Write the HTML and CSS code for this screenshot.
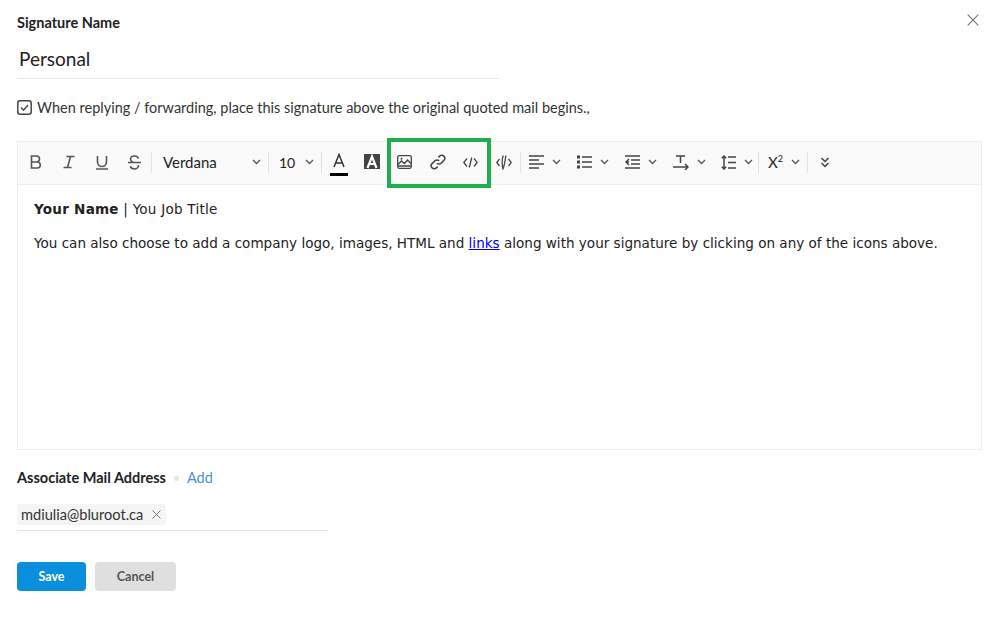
FILE: index.html
```html
<!DOCTYPE html>
<html lang="en">
<head>
<meta charset="utf-8">
<title>Signature</title>
<link rel="stylesheet" href="styles.css">
</head>
<body>
<main class="page">
  <button class="close" aria-label="Close">
    <svg width="12" height="12" viewBox="0 0 12 12"><path d="M.7.7l10.600 10.600M11.300.7L.7 11.300" class="s"/></svg>
  </button>
  <h2 class="label">Signature Name</h2>
  <div class="name-field">Personal</div>
  <label class="check-row">
    <svg class="check" width="15" height="15" viewBox="0 0 15 15"><rect x=".8" y=".8" width="13.400" height="13.400" rx="2.500" class="m"/><path d="M4 7.600l2.500 2.600L11 5" class="m"/></svg>
    <span>When replying / forwarding, place this signature above the original quoted mail begins.,</span>
  </label>

  <section class="editor">
    <div class="toolbar">
      <span class="btn"><svg width="14" height="14" viewBox="0 0 14 14"><path d="M2.500 1h5a3 3 0 0 1 0 6h-5zM2.500 7h5.800a3 3 0 0 1 0 6H2.500z" class="g"/></svg></span>
      <span class="btn"><svg width="14" height="14" viewBox="0 0 14 14"><path d="M4.500 1.500h8M1.500 12.500h8M8.500 1.500l-3 11" class="g"/></svg></span>
      <span class="btn"><svg width="14" height="15" viewBox="0 0 14 15"><path d="M2.500 1v6a4.500 4.500 0 0 0 9 0V1M1 14h12" class="g"/></svg></span>
      <span class="btn"><svg width="15" height="15" viewBox="0 0 15 15"><path d="M1 7.500h13M11.500 3.500C11 2 9.500 1 7.500 1 5.500 1 3.500 2 3.500 4c0 1.500 1 2.500 2.500 3.500M11.500 10c0 2.500-2 4-4 4-2.200 0-3.700-1-4.200-2.700" class="g"/></svg></span>
      <i class="sep"></i>
      <span class="select font-select">Verdana<svg class="chev" width="9" height="6" viewBox="0 0 9 6"><path d="M1 1l3.500 3.500L8 1"/></svg></span>
      <i class="sep"></i>
      <span class="select size-select">10<svg class="chev" width="9" height="6" viewBox="0 0 9 6"><path d="M1 1l3.500 3.500L8 1"/></svg></span>
      <i class="sep"></i>
      <span class="btn">
        <svg class="color-a" width="18" height="23" viewBox="0 0 18 23"><path d="M4 14L9 1.500 14 14M5.600 10h6.800" class="d"/><rect y="20" width="18" height="3" fill="#000"/></svg>
      </span>
      <span class="btn">
        <svg class="bg-a" width="16" height="15" viewBox="0 0 16 15"><rect width="16" height="15" fill="#444"/><path d="M3.500 14L8 2.500 12.500 14M5 10h6" fill="none" stroke="#fff" stroke-width="2.200"/></svg>
      </span>
      <div class="group">
        <span class="btn"><svg width="15" height="14" viewBox="0 0 15 14"><rect x=".7" y=".7" width="13.600" height="12.600" rx="1.500" class="s"/><path d="M1 9.500l3.500-3.500 3 2.500 3-3.500 3.500 3.500M1 11h13" class="s"/><circle cx="4.500" cy="3.800" r="1" fill="#444"/></svg></span>
        <span class="btn"><svg width="16" height="16" viewBox="0 0 16 16"><path d="M6.800 9.200a3 3 0 0 0 4.300 0l2.800-2.800a3 3 0 0 0-4.300-4.300L8.300 3.400M9.200 6.800a3 3 0 0 0-4.300 0L2.100 9.600a3 3 0 0 0 4.300 4.300l1.300-1.300" class="l"/></svg></span>
        <span class="btn"><svg width="15" height="11" viewBox="0 0 15 11"><path d="M4 1.500L.8 5.500 4 9.500M11 1.500l3.200 4-3.200 4M8.700.5L6.300 10.500" class="s"/></svg></span>
      </div>
      <span class="btn"><svg width="16" height="17" viewBox="0 0 16 17"><path d="M3.500 5L.8 8.500 3.500 12M12.500 5l2.700 3.500-2.700 3.500M7.200 1.500C5.800 5 5.800 12 7.200 15.500M9.800 1.500c-.6 5-1.300 10-3 14" class="s"/></svg></span>
      <i class="sep"></i>
      <span class="btn pair"><svg width="15" height="14" viewBox="0 0 15 14"><path d="M0 1h15M0 5h10M0 9h15M0 13h10" class="m"/></svg><svg class="chev" width="9" height="6" viewBox="0 0 9 6"><path d="M1 1l3.500 3.500L8 1"/></svg></span>
      <span class="btn pair"><svg width="15" height="14" viewBox="0 0 15 14"><path d="M5 2h10M5 7h10M5 12h10" class="m"/><path d="M0 .5h3v3H0zM0 5.500h3v3H0zM0 10.500h3v3H0z" fill="#444"/></svg><svg class="chev" width="9" height="6" viewBox="0 0 9 6"><path d="M1 1l3.500 3.500L8 1"/></svg></span>
      <span class="btn pair"><svg width="15" height="14" viewBox="0 0 15 14"><path d="M0 1h15M6 5h9M6 9h9M0 13h15M4 4L1 7l3 3M1 7h3" class="m"/></svg><svg class="chev" width="9" height="6" viewBox="0 0 9 6"><path d="M1 1l3.500 3.500L8 1"/></svg></span>
      <span class="btn pair"><svg width="16" height="15" viewBox="0 0 16 15"><path d="M3 1h9M7.500 1v7M0 12h15M12 9l3 3-3 3" class="m"/></svg><svg class="chev" width="9" height="6" viewBox="0 0 9 6"><path d="M1 1l3.500 3.500L8 1"/></svg></span>
      <span class="btn pair pair-short"><svg width="15" height="15" viewBox="0 0 15 15"><path d="M7 2h8M7 7.500h8M7 13h8M3 1v13M.8 3.200L3 1l2.200 2.200M.8 11.800L3 14l2.200-2.200" class="m"/></svg><svg class="chev" width="9" height="6" viewBox="0 0 9 6"><path d="M1 1l3.500 3.500L8 1"/></svg></span>
      <i class="sep"></i>
      <span class="btn pair sup"><span class="x2">X<sup>2</sup></span><svg class="chev" width="9" height="6" viewBox="0 0 9 6"><path d="M1 1l3.500 3.500L8 1"/></svg></span>
      <i class="sep"></i>
      <span class="btn"><svg width="10" height="11" viewBox="0 0 10 11"><path d="M1.500 1L5 4.500 8.500 1M1.500 6L5 9.500 8.500 6" class="m"/></svg></span>
    </div>
    <div class="content">
      <p class="title-line"><strong>Your Name</strong> | You Job Title</p>
      <p>You can also choose to add a company logo, images, HTML and <a href="#">links</a> along with your signature by clicking on any of the icons above.</p>
    </div>
  </section>

  <div class="assoc">
    <h2 class="label">Associate Mail Address</h2>
    <i class="dot"></i>
    <a class="add" href="#">Add</a>
  </div>
  <div class="mail-field">
    <span class="chip">mdiulia@bluroot.ca
      <svg width="9" height="9" viewBox="0 0 9 9"><path d="M.5.500l8 8M8.500.500l-8 8" fill="none" stroke="#777"/></svg>
    </span>
  </div>
  <div class="actions">
    <button class="primary">Save</button>
    <button class="secondary">Cancel</button>
  </div>
</main>
</body>
</html>
```
FILE: styles.css
```css
* { box-sizing: border-box; }
html, body { margin: 0; height: 100%; background: #fff; overflow: hidden; }
body { font-family: Lato, sans-serif; color: #222; }
.page { position: relative; padding: 14px 18px 0 17px; height: 617px; }
.s { fill: none; stroke: #444; stroke-width: 1.3; }
.g { fill: none; stroke: #555; stroke-width: 1.6; }
.l { fill: none; stroke: #444; stroke-width: 1.5; }
.m { fill: none; stroke: #444; stroke-width: 1.5; }
.d { fill: none; stroke: #333; stroke-width: 1.5; }
.close { position: absolute; top: 14px; right: 21px; padding: 0; border: 0; background: none; line-height: 0; }
.close .s { stroke: #777; stroke-width: 1.2; }
.label { margin: 0; font-size: 14.500px; line-height: 17px; font-weight: 700; color: #222; }
.name-field { width: 482px; height: 39px; margin-top: 9px; padding: 6px 0 0 2px; font-size: 19px; line-height: 26px; color: #222; border-bottom: 1px solid #e6e6e6; }
.check-row { display: flex; align-items: center; gap: 5px; margin-top: 18px; height: 20px; font-size: 14.500px; color: #333; }
.check { flex: none; }
.editor { width: 965px; height: 309px; margin-top: 24px; border: 1px solid #eee; }
.toolbar { display: flex; align-items: center; height: 43px; padding: 0 0 2px 1px; background: #fafafa; border-bottom: 1px solid #eee; }
.btn { display: flex; align-items: center; justify-content: center; flex: none; width: 33px; height: 30px; }
.sep { flex: none; width: 1px; height: 21px; background: #e2e2e2; }
.select { display: flex; align-items: center; flex: none; font-size: 15px; color: #222; }
.font-select { width: 116px; padding: 0 7px 0 11px; justify-content: space-between; }
.size-select { width: 52px; padding: 0 7px 0 10px; justify-content: space-between; font-size: 14px; }
.chev { fill: none; stroke: #555; stroke-width: 1.3; flex: none; }
.color-a { margin-top: 5px; }
.bg-a { margin-top: -1px; }
.group { position: relative; display: flex; flex: none; }
.group::before { content: ""; position: absolute; left: -1px; right: -4px; top: -9px; bottom: -11px; border: 4px solid #1fae4b; pointer-events: none; }
.pair { width: 48px; justify-content: flex-start; gap: 8px; padding-left: 8px; }
.pair-short { width: 45px; }
.sup { padding-left: 9px; gap: 8px; }
.x2 { font-size: 15px; color: #333; font-weight: 500; }
.x2 sup { font-size: 9px; line-height: 0; }
.content { padding: 16px 15px 0 16px; font-family: "DejaVu Sans", Verdana, sans-serif; font-size: 13.550px; line-height: 17px; color: #222; }
.content p { margin: 0 0 17px; }
.content .title-line { letter-spacing: .23px; }
.content a { color: #0000ee; }
.assoc { display: flex; align-items: center; margin-top: 19px; height: 17px; }
.dot { width: 5px; height: 5px; margin: 2px 8px 0; background: #e4e4e4; border-radius: 50%; }
.add { font-size: 14.500px; color: #4a90d9; text-decoration: none; }
.mail-field { width: 311px; height: 33px; margin-top: 12px; padding-top: 6px; border-bottom: 1px solid #e4e4e4; }
.chip { display: inline-flex; align-items: center; gap: 9px; height: 21px; padding: 0 5px 0 4px; font-size: 14.600px; color: #333; background: #f5f5f5; border-radius: 3px; }
.actions { display: flex; gap: 9px; margin-top: 31px; }
.actions button { height: 29px; padding: 0; border: 0; border-radius: 4px; font: 700 12.500px Lato, sans-serif; }
.primary { width: 69px; background: #0a8fdc; color: #fff; }
.secondary { width: 81px; background: #dfdfdf; color: #555; }
```
